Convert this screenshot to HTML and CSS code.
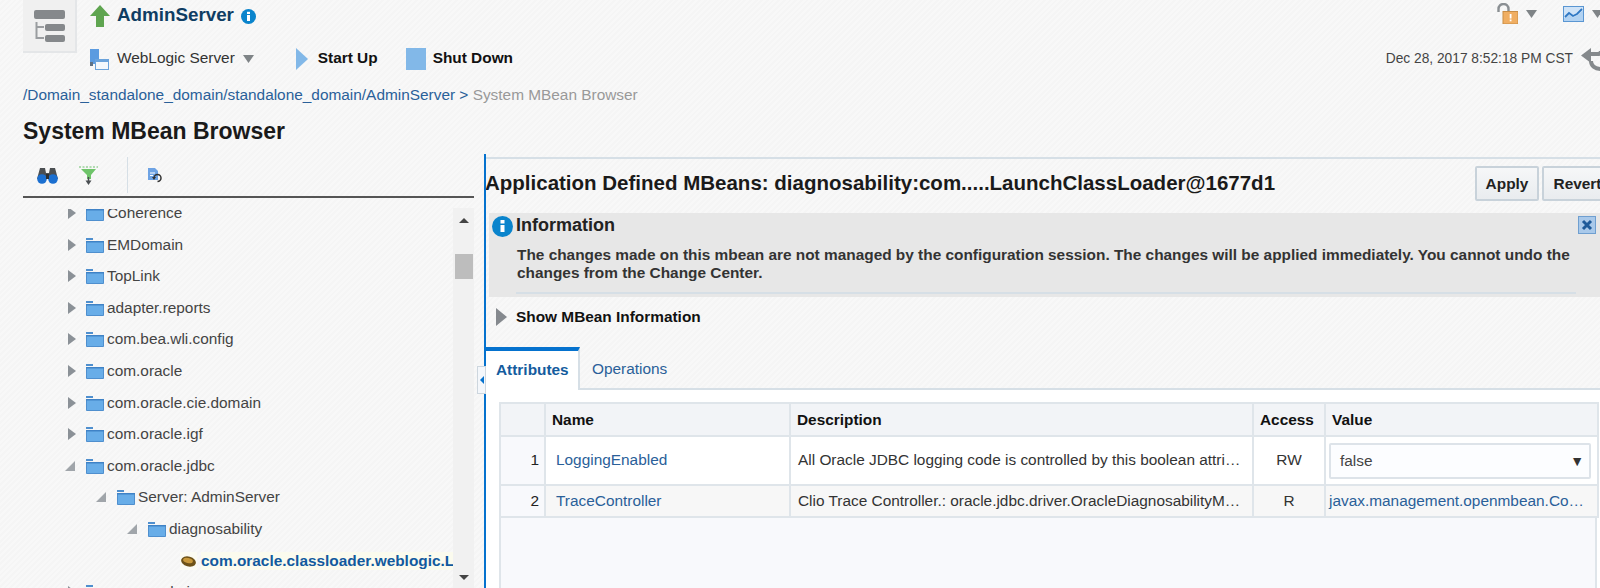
FILE: index.html
```html
<!DOCTYPE html>
<html lang="en">
<head>
<meta charset="utf-8">
<title>System MBean Browser</title>
<link rel="stylesheet" href="styles.css">
</head>
<body>
<svg class="defs" width="0" height="0" aria-hidden="true">
  <symbol id="folder" viewBox="0 0 18 16">
    <path d="M0 1h7v2H0z" fill="#4f8fce"/>
    <path d="M0.5 4.5h17v11h-17z" fill="#68ade8" stroke="#4f8fce"/>
    <path d="M0 4h18v1.5H0z" fill="#3f82c6"/>
  </symbol>
  <symbol id="tri-r" viewBox="0 0 8 12"><path d="M0 0l8 6-8 6z" fill="#8b9197"/></symbol>
  <symbol id="tri-o" viewBox="0 0 10 10"><path d="M10 0v10H0z" fill="#a0a5aa"/></symbol>
  <symbol id="caret" viewBox="0 0 11 8"><path d="M0 0h11L5.500 8z" fill="#7f8487"/></symbol>
</svg>

<header class="top">
  <div class="tile">
    <svg width="33" height="33" viewBox="0 0 33 33">
      <rect x="0" y="1" width="31" height="9" rx="2" fill="#85888b"/>
      <rect x="11" y="15" width="20" height="7" rx="2" fill="#85888b"/>
      <rect x="11" y="26" width="20" height="7" rx="2" fill="#85888b"/>
      <path d="M2.500 13v16H10M2.500 18H10" fill="none" stroke="#9a9da0" stroke-width="2"/>
    </svg>
  </div>
  <div class="target">
    <div class="target-name">
      <svg width="20" height="22" viewBox="0 0 20 22"><path d="M10 0l10 11h-6v11H6V11H0z" fill="#5fa550"/></svg>
      <span class="server-name">AdminServer</span>
      <svg width="15" height="15" viewBox="0 0 15 15"><circle cx="7.500" cy="7.500" r="7.500" fill="#0a84cc"/><rect x="6" y="6" width="3" height="6" fill="#fff"/><rect x="6" y="2.800" width="3" height="2.200" fill="#fff"/></svg>
    </div>
    <div class="target-actions">
      <svg width="19" height="22" viewBox="0 0 19 22"><path d="M0 1h9v15H0z" fill="#5b9be0"/><path d="M0 14h3v4H0z" fill="#5f7285"/><rect x="5.500" y="11.500" width="13" height="10" fill="#f4f8fc" stroke="#6ba3db"/><rect x="5" y="11" width="14" height="3" fill="#6ba3db"/></svg>
      <span class="target-type">WebLogic Server</span>
      <svg class="type-caret" width="11" height="8"><use href="#caret"/></svg>
      <svg class="start-icon" width="12" height="22" viewBox="0 0 12 22"><path d="M0 0l12 11L0 22z" fill="#82b8e8"/></svg>
      <span class="action">Start Up</span>
      <span class="stop-icon"></span>
      <span class="action">Shut Down</span>
    </div>
  </div>
  <div class="status">
    <div class="status-icons">
      <svg width="21" height="21" viewBox="0 0 21 21"><path d="M1.500 9V6a5 5 0 0 1 10 0v2" fill="none" stroke="#8a8f93" stroke-width="2.400"/><rect x="6" y="8.500" width="15" height="12.500" fill="#f0ae62" stroke="#c98d45"/><rect x="12.700" y="11" width="1.800" height="4.500" fill="#fff"/><rect x="12.700" y="16.500" width="1.800" height="1.800" fill="#fff"/></svg>
      <svg class="status-caret" width="11" height="8"><use href="#caret"/></svg>
      <svg class="chart" width="21" height="16" viewBox="0 0 21 16"><rect x="0.500" y="0.500" width="20" height="15" fill="#cfe3f7" stroke="#5a96d2"/><path d="M1 12.500l5-4 4 3 4-2 6-5V15H1z" fill="#9cc6ee" opacity=".6"/><path d="M2 11l4-4 4 3 4-2 5-5" fill="none" stroke="#2f78c4" stroke-width="1.800"/></svg>
      <svg class="status-caret" width="11" height="8"><use href="#caret"/></svg>
    </div>
    <div class="status-time">
      <span class="timestamp">Dec 28, 2017 8:52:18 PM CST</span>
      <svg width="25" height="24" viewBox="0 0 25 24"><path d="M0 7.500L10 0v15z" fill="#85898c"/><path d="M8 6h9c2 0 3-1 3-3M10 13c0 5 4 8 11 8" fill="none" stroke="#85898c" stroke-width="4"/></svg>
    </div>
  </div>
</header>

<nav class="crumbs"><a class="link">/Domain_standalone_domain/standalone_domain/AdminServer</a> <span class="crumb-sep">&gt;</span> <span class="crumb-here">System MBean Browser</span></nav>
<h1 class="page-title">System MBean Browser</h1>

<main class="workspace">
  <section class="tree-panel">
    <div class="tree-tools">
      <svg class="tool-bino" width="21" height="18" viewBox="0 0 21 18"><path d="M3 2h5l1 5h3l1-5h5l3 11H0z" fill="#4b4f52"/><circle cx="5" cy="13" r="4.800" fill="#1b6fd0"/><circle cx="16" cy="13" r="4.800" fill="#1b6fd0"/><rect x="9" y="8" width="3" height="5" fill="#2c2f31"/></svg>
      <svg class="tool-filter" width="19" height="19" viewBox="0 0 19 19"><path d="M0 1h19" stroke="#6cbf6c" stroke-width="1.200" stroke-dasharray="2 1.500"/><path d="M2 3h15l-5 6v4H8V9z" fill="#6fc46a"/><path d="M9.500 11v6" stroke="#4a4f52" stroke-width="1.500"/><path d="M6.500 14.500h6L9.500 19z" fill="#4a4f52"/></svg>
      <span class="tool-sep"></span>
      <svg class="tool-doc" width="14" height="15" viewBox="0 0 14 15"><path d="M0 0h7l3 3v9H0z" fill="#6ea3e4"/><path d="M2 5h5M2 7.500h3" stroke="#fff"/><path d="M6 10a3.500 3.500 0 1 1 3.500 3.500" fill="none" stroke="#333" stroke-width="1.500"/><path d="M4 9h4l-2 3z" fill="#333"/></svg>
    </div>
    <div class="tree-body">
      <ul class="tree">
        <li class="node"><svg class="twist" width="8" height="12"><use href="#tri-r"/></svg><svg class="folder" width="18" height="16"><use href="#folder"/></svg><span>Coherence</span></li>
        <li class="node"><svg class="twist" width="8" height="12"><use href="#tri-r"/></svg><svg class="folder" width="18" height="16"><use href="#folder"/></svg><span>EMDomain</span></li>
        <li class="node"><svg class="twist" width="8" height="12"><use href="#tri-r"/></svg><svg class="folder" width="18" height="16"><use href="#folder"/></svg><span>TopLink</span></li>
        <li class="node"><svg class="twist" width="8" height="12"><use href="#tri-r"/></svg><svg class="folder" width="18" height="16"><use href="#folder"/></svg><span>adapter.reports</span></li>
        <li class="node"><svg class="twist" width="8" height="12"><use href="#tri-r"/></svg><svg class="folder" width="18" height="16"><use href="#folder"/></svg><span>com.bea.wli.config</span></li>
        <li class="node"><svg class="twist" width="8" height="12"><use href="#tri-r"/></svg><svg class="folder" width="18" height="16"><use href="#folder"/></svg><span>com.oracle</span></li>
        <li class="node"><svg class="twist" width="8" height="12"><use href="#tri-r"/></svg><svg class="folder" width="18" height="16"><use href="#folder"/></svg><span>com.oracle.cie.domain</span></li>
        <li class="node"><svg class="twist" width="8" height="12"><use href="#tri-r"/></svg><svg class="folder" width="18" height="16"><use href="#folder"/></svg><span>com.oracle.igf</span></li>
        <li class="node"><svg class="twist open" width="10" height="10"><use href="#tri-o"/></svg><svg class="folder" width="18" height="16"><use href="#folder"/></svg><span>com.oracle.jdbc</span></li>
        <li class="node level-1"><svg class="twist open" width="10" height="10"><use href="#tri-o"/></svg><svg class="folder" width="18" height="16"><use href="#folder"/></svg><span>Server: AdminServer</span></li>
        <li class="node level-2"><svg class="twist open" width="10" height="10"><use href="#tri-o"/></svg><svg class="folder" width="18" height="16"><use href="#folder"/></svg><span>diagnosability</span></li>
        <li class="node level-3">
          <svg class="bean" width="17" height="18" viewBox="0 0 17 18"><rect width="17" height="18" fill="#fbfbf3"/><ellipse cx="8.500" cy="9.500" rx="7.500" ry="5" transform="rotate(15 8.500 9.500)" fill="#6e5218"/><ellipse cx="8" cy="8.500" rx="5" ry="2.500" transform="rotate(15 8 8.500)" fill="#c8983a"/></svg>
          <span class="selected">com.oracle.classloader.weblogic.LaunchClassLoader</span>
        </li>
        <li class="node"><svg class="twist" width="8" height="12"><use href="#tri-r"/></svg><svg class="folder" width="18" height="16"><use href="#folder"/></svg><span>com.oracle.jps</span></li>
      </ul>
      <div class="scrollbar">
        <span class="scroll-up"></span>
        <span class="scroll-thumb"></span>
        <span class="scroll-down"></span>
      </div>
    </div>
  </section>

  <div class="splitter"><span class="split-handle"></span></div>

  <section class="detail">
    <div class="detail-head">
      <h2 class="detail-title">Application Defined MBeans: diagnosability:com.....LaunchClassLoader@1677d1</h2>
      <div class="buttons">
        <button class="btn btn-apply">Apply</button>
        <button class="btn btn-revert">Revert</button>
      </div>
    </div>

    <div class="notice">
      <div class="notice-head">
        <svg width="21" height="21" viewBox="0 0 21 21"><circle cx="10.500" cy="10.500" r="10.500" fill="#0a84cc"/><rect x="8.500" y="9" width="4" height="7" fill="#fff"/><rect x="8.500" y="4" width="4" height="3.500" fill="#fff"/></svg>
        <span class="notice-title">Information</span>
        <svg class="notice-close" width="18" height="18" viewBox="0 0 18 18"><rect x="0.500" y="0.500" width="17" height="17" fill="#a9c9ea" stroke="#6f9fd0"/><path d="M5 5l8 8M13 5l-8 8" stroke="#1d5a9a" stroke-width="3"/></svg>
      </div>
      <p class="notice-text">The changes made on this mbean are not managed by the configuration session. The changes will be applied immediately. You cannot undo the changes from the Change Center.</p>
    </div>

    <div class="disclosure">
      <svg width="11" height="18" viewBox="0 0 11 18"><path d="M0 0l11 9-11 9z" fill="#85898e"/></svg>
      <span>Show MBean Information</span>
    </div>

    <div class="tabs">
      <span class="tab tab-active">Attributes</span>
      <span class="tab link">Operations</span>
    </div>

    <div class="tab-panel">
      <table class="grid">
        <colgroup><col class="col-idx"><col class="col-name"><col class="col-desc"><col class="col-access"><col class="col-value"></colgroup>
        <thead>
          <tr><th></th><th>Name</th><th>Description</th><th>Access</th><th>Value</th></tr>
        </thead>
        <tbody>
          <tr class="row-tall">
            <td class="idx">1</td>
            <td class="attr"><a class="link">LoggingEnabled</a></td>
            <td>All Oracle JDBC logging code is controlled by this boolean attribute.</td>
            <td class="access">RW</td>
            <td class="val"><div class="select"><span>false</span><span class="select-arrow">▼</span></div></td>
          </tr>
          <tr class="row-alt">
            <td class="idx">2</td>
            <td class="attr"><a class="link">TraceController</a></td>
            <td>Clio Trace Controller.: oracle.jdbc.driver.OracleDiagnosabilityMBean</td>
            <td class="access">R</td>
            <td class="val link">javax.management.openmbean.CompositeData</td>
          </tr>
        </tbody>
      </table>
      <div class="grid-empty"></div>
    </div>
  </section>
</main>
</body>
</html>
```

FILE: styles.css
```css
* { box-sizing: border-box; }
html, body { margin: 0; height: 588px; overflow: hidden; }
body {
  font-family: "Liberation Sans", Arial, sans-serif;
  font-size: 15.4px;
  color: #333;
  display: flex;
  flex-direction: column;
  background: repeating-linear-gradient(135deg, #f8f8f8 0 2px, #f5f5f5 2px 4px);
}
svg { display: block; flex: none; }
.defs { position: absolute; }
.link { color: #2a6099; }

/* header */
.top { display: flex; height: 70px; flex: none; }
.tile {
  width: 54px;
  height: 53px;
  margin-left: 23px;
  background: #f0f0f0;
  border-right: 2px solid #e4e6e8;
  border-bottom: 2px solid #e4e6e8;
  padding: 9px 0 0 11px;
}
.target { margin-left: 13px; padding-top: 5px; }
.target-name { display: flex; align-items: center; height: 22px; }
.server-name { margin-left: 7px; font-size: 18.8px; font-weight: bold; color: #0f3d63; line-height: 22px; padding-bottom: 2px; }
.target-name svg:last-child { margin-left: 7px; }
.target-actions { display: flex; align-items: center; height: 22px; margin-top: 21px; }
.target-type { margin-left: 8px; color: #333; padding-bottom: 3px; }
.type-caret { margin-left: 8px; }
.start-icon { margin-left: 42px; }
.action { margin-left: 10px; font-weight: bold; color: #111; padding-bottom: 3px; }
.stop-icon { width: 20px; height: 22px; margin-left: 28px; background: #82b8e8; }
.action:last-child { margin-left: 7px; }
.status { margin-left: auto; padding-top: 3px; display: flex; flex-direction: column; align-items: flex-end; }
.status-icons { display: flex; align-items: center; height: 21px; margin-right: -3px; }
.status-caret { margin-left: 8px; }
.chart { margin-left: 26px; }
.status-time { display: flex; align-items: center; height: 24px; margin-top: 24px; margin-right: -6px; }
.timestamp { font-size: 13.750px; color: #444; margin-right: 8px; padding-bottom: 4px; }

/* page heading */
.crumbs { margin: 16px 0 0 23px; line-height: 18px; white-space: nowrap; }
.crumb-sep { color: #2a6099; }
.crumb-here { color: #999; }
.page-title { margin: 13px 0 0 23px; font-size: 23px; line-height: 28px; font-weight: bold; color: #1a1a1a; }

/* main split */
.workspace { display: flex; flex: 1; min-height: 0; margin-top: 9px; }
.tree-panel { width: 451px; margin-left: 23px; flex: none; display: flex; flex-direction: column; }
.tree-tools { display: flex; align-items: center; height: 44px; flex: none; border-bottom: 2px solid #555; }
.tool-bino { margin-left: 14px; }
.tool-filter { margin-left: 21px; }
.tool-sep { width: 1px; height: 36px; margin-left: 29px; background: #d6dfe6; }
.tool-doc { margin-left: 20px; }

.tree-body { flex: 1; min-height: 0; display: flex; margin-top: 10px; }
.tree { list-style: none; margin: 1px 0 0; padding: 0 0 0 45px; width: 430px; flex: none; overflow: hidden; }
.node { display: flex; align-items: center; height: 31.600px; color: #444; white-space: nowrap; }
.node:first-child { margin-top: -11.800px; }
.twist { margin-right: 10px; }
.twist.open { margin: 0 11px 0 -3px; }
.folder { margin-right: 3px; }
.level-1 { padding-left: 31px; }
.level-2 { padding-left: 62px; }
.level-3 { padding-left: 112px; }
.selected {
  margin-left: 4px;
  font-weight: bold;
  color: #125a9e;
  background: #fbfbee;
  line-height: 18px;
}
.scrollbar { width: 21px; flex: none; position: relative; background: #f1f1f1; display: flex; flex-direction: column; align-items: center; }
.scroll-up { margin-top: 10px; border: 5px solid transparent; border-top: 0; border-bottom-color: #444; }
.scroll-thumb { width: 18px; height: 25px; margin-top: 31px; background: #bdbdbd; }
.scroll-down { margin-top: auto; margin-bottom: 8px; border: 5px solid transparent; border-bottom: 0; border-top-color: #444; }

.splitter { width: 10px; flex: none; position: relative; }
.split-handle {
  position: absolute;
  left: 3px;
  top: 212px;
  width: 9px;
  height: 28px;
  background: #f4f7fb;
  border: 1px solid #cdd6de;
  z-index: 2;
}
.split-handle::after {
  content: "";
  position: absolute;
  left: 2px;
  top: 9px;
  border: 4px solid transparent;
  border-left: 0;
  border-right-color: #0572ce;
}

/* detail */
.detail { flex: 1; min-width: 0; border-left: 2px solid #0572ce; display: flex; flex-direction: column; overflow: hidden; }
.detail-head { display: flex; justify-content: space-between; height: 56px; margin-top: 3px; border-top: 2px solid #d6dfe6; flex: none; }
.detail-title { margin: 0 0 0 -1px; font-size: 20.500px; line-height: 48px; font-weight: bold; color: #1a1a1a; white-space: nowrap; }
.buttons { display: flex; gap: 3px; margin-top: 7px; margin-right: -13px; }
.btn {
  height: 35px;
  font: bold 15.4px "Liberation Sans", Arial, sans-serif;
  color: #222;
  background: linear-gradient(#f6f7f8, #e9ecef);
  border: 2px solid #c8d2da;
  border-radius: 2px;
  padding: 0;
}
.btn-apply { width: 64px; }
.btn-revert { width: 71px; }

.notice { height: 84px; margin-left: 3px; background: #e7e7e7; position: relative; flex: none; }
.notice::after { content: ""; position: absolute; left: 27px; right: 24px; top: 79px; height: 2px; background: #d6dfe6; }
.notice-head { display: flex; align-items: center; padding: 3px 0 0 3px; height: 24px; }
.notice-title { margin-left: 3px; font-size: 18px; font-weight: bold; color: #222; line-height: 19px; padding-bottom: 2px; }
.notice-close { position: absolute; right: 4px; top: 3px; }
.notice-text { margin: 9px 20px 0 28px; line-height: 18.200px; font-weight: bold; color: #333; }

.disclosure { display: flex; align-items: center; gap: 9px; height: 50px; padding: 0 0 10px 10px; font-weight: bold; color: #111; flex: none; }

.tabs { display: flex; height: 43px; flex: none; border-bottom: 2px solid #d6dfe6; }
.tab { display: block; line-height: 39px; }
.tab-active { width: 94px; height: 43px; padding-left: 10px; line-height: 38px; font-weight: bold; color: #145c9e; background: #fff; border-top: 4px solid #0572ce; border-right: 2px solid #d6dfe6; }
.tab.link { margin-left: 12px; line-height: 44px; }

.tab-panel { flex: 1; min-height: 0; background: #fff; padding: 12px 3px 0 13px; display: flex; flex-direction: column; }
.grid { width: 1098px; table-layout: fixed; border-collapse: collapse; flex: none; }
.col-idx { width: 45px; }
.col-name { width: 245px; }
.col-desc { width: 463px; }
.col-access { width: 72px; }
.col-value { width: 273px; }
.grid th, .grid td { border: 2px solid #dfe5ea; padding: 0 0 0 6px; overflow: hidden; text-overflow: ellipsis; white-space: nowrap; }
.grid th { height: 33px; background: #f2f4f7; text-align: left; font-weight: bold; color: #111; }
.row-tall td { height: 49px; background: #fff; vertical-align: top; line-height: 46px; }
.row-alt td { height: 32px; background: #f7f7f7; }
.grid td { padding-right: 9px; padding-left: 7px; }
.grid td.idx { background: #f8f9fc; text-align: right; padding: 0 5px 0 0; color: #222; }
.grid td.attr { padding-left: 10px; }
.grid td.access { text-align: center; padding: 0; }
.grid td.val { padding: 0 12px 0 3px; }
.select { display: flex; justify-content: space-between; align-items: center; height: 36px; margin: 6px -6px 0 0; padding: 0 5px 0 9px; line-height: normal; background: #fcfdff; border: 2px solid #dde3e9; border-radius: 2px; color: #444; }
.select-arrow { font-size: 14px; color: #333; }
.grid-empty { flex: 1; background: #f8f9fc; border: 2px solid #dfe5ea; border-top: 0; border-bottom: 0; }
```
